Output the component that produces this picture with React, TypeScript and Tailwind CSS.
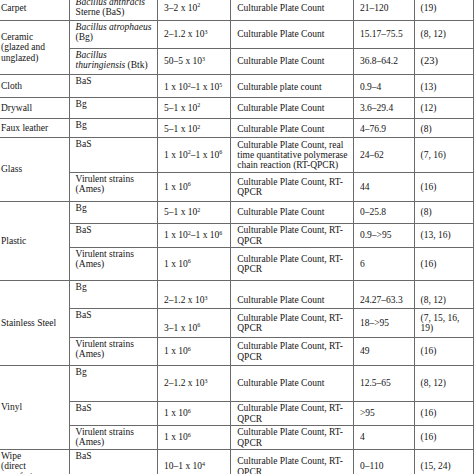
import React from "react";

const base = "border border-[#6a6a6a] py-0 pl-[6px] pr-[5px]";
const mid = base + " align-middle";
const top = base + " align-top pt-[1px]";
const c1 = "border border-[#6a6a6a] py-0 pl-[6px] pr-[10px] align-middle";

const Sup = ({ children }: { children: React.ReactNode }) => (
  <sup className="text-[6px] top-[-0.6em]">{children}</sup>
);

const CPC = "Culturable Plate Count";
const RT = "Culturable Plate Count, RT-QPCR";

export default function App() {
  return (
    <div className="w-[474px] h-[474px] overflow-hidden bg-white">
      <table className="table-fixed border-collapse -ml-[6px] -mt-[5px] font-['Liberation_Serif',serif] text-[9.5px] leading-[10.3px] text-[#141414]">
        <colgroup>
          <col className="w-[75px]" />
          <col className="w-[89px]" />
          <col className="w-[74px]" />
          <col className="w-[124px]" />
          <col className="w-[61px]" />
          <col className="w-[60px]" />
        </colgroup>
        <tbody>
          <tr className="h-[25px]">
            <td className={c1}>Carpet</td>
            <td className={top}>
              <span className="italic">Bacillus anthracis</span> Sterne (BaS)
            </td>
            <td className={mid}>3–2 x 10<Sup>2</Sup></td>
            <td className={mid}>{CPC}</td>
            <td className={mid}>21–120</td>
            <td className={mid}>(19)</td>
          </tr>
          <tr className="h-[28px]">
            <td className={c1} rowSpan={2}>Ceramic (glazed and unglazed)</td>
            <td className={top}>
              <span className="italic">Bacillus atrophaeus</span> (Bg)
            </td>
            <td className={mid}>2–1.2 x 10<Sup>3</Sup></td>
            <td className={mid}>{CPC}</td>
            <td className={mid}>15.17–75.5</td>
            <td className={mid}>(8, 12)</td>
          </tr>
          <tr className="h-[26px]">
            <td className={top}>
              <span className="italic">Bacillus thuringiensis</span> (Btk)
            </td>
            <td className={mid}>50–5 x 10<Sup>3</Sup></td>
            <td className={mid}>{CPC}</td>
            <td className={mid}>36.8–64.2</td>
            <td className={mid + " text-[10.5px]"}>(23)</td>
          </tr>
          <tr className="h-[23px]">
            <td className={c1}>Cloth</td>
            <td className={top}>BaS</td>
            <td className={mid + " pt-[3px]"}>1 x 10<Sup>2</Sup>–1 x 10<Sup>5</Sup></td>
            <td className={mid + " pt-[3px]"}>Culturable plate count</td>
            <td className={mid + " pt-[3px]"}>0.9–4</td>
            <td className={mid + " pt-[3px]"}>(13)</td>
          </tr>
          <tr className="h-[21px]">
            <td className={c1}>Drywall</td>
            <td className={top}>Bg</td>
            <td className={mid}>5–1 x 10<Sup>2</Sup></td>
            <td className={mid}>{CPC}</td>
            <td className={mid}>3.6–29.4</td>
            <td className={mid}>(12)</td>
          </tr>
          <tr className="h-[19px]">
            <td className={c1}>Faux leather</td>
            <td className={top}>Bg</td>
            <td className={mid + " pt-[3px]"}>5–1 x 10<Sup>2</Sup></td>
            <td className={mid + " pt-[3px]"}>{CPC}</td>
            <td className={mid + " pt-[3px]"}>4–76.9</td>
            <td className={mid + " pt-[3px]"}>(8)</td>
          </tr>
          <tr className="h-[35px]">
            <td className={c1} rowSpan={2}>Glass</td>
            <td className={top}>BaS</td>
            <td className={mid}>1 x 10<Sup>2</Sup>–1 x 10<Sup>6</Sup></td>
            <td className={mid}>
              Culturable Plate Count, real time quantitative polymerase chain reaction (RT-QPCR)
            </td>
            <td className={mid}>24–62</td>
            <td className={mid}>(7, 16)</td>
          </tr>
          <tr className="h-[29px]">
            <td className={top}>Virulent strains (Ames)</td>
            <td className={mid}>1 x 10<Sup>6</Sup></td>
            <td className={mid}>{RT}</td>
            <td className={mid}>44</td>
            <td className={mid}>(16)</td>
          </tr>
          <tr className="h-[22px]">
            <td className={c1} rowSpan={3}>Plastic</td>
            <td className={top}>Bg</td>
            <td className={mid}>5–1 x 10<Sup>2</Sup></td>
            <td className={mid}>{CPC}</td>
            <td className={mid}>0–25.8</td>
            <td className={mid}>(8)</td>
          </tr>
          <tr className="h-[24px]">
            <td className={top}>BaS</td>
            <td className={mid}>1 x 10<Sup>2</Sup>–1 x 10<Sup>6</Sup></td>
            <td className={mid}>{RT}</td>
            <td className={mid}>0.9–&gt;95</td>
            <td className={mid}>(13, 16)</td>
          </tr>
          <tr className="h-[33px]">
            <td className={top}>Virulent strains (Ames)</td>
            <td className={mid}>1 x 10<Sup>6</Sup></td>
            <td className={mid}>{RT}</td>
            <td className={mid}>6</td>
            <td className={mid}>(16)</td>
          </tr>
          <tr className="h-[28px]">
            <td className={c1} rowSpan={3}>Stainless Steel</td>
            <td className={top}>Bg</td>
            <td className={mid + " pt-[12px]"}>2–1.2 x 10<Sup>3</Sup></td>
            <td className={mid + " pt-[12px]"}>{CPC}</td>
            <td className={mid + " pt-[12px]"}>24.27–63.3</td>
            <td className={mid + " pt-[12px]"}>(8, 12)</td>
          </tr>
          <tr className="h-[29px]">
            <td className={top}>BaS</td>
            <td className={mid + " pt-[10px]"}>3–1 x 10<Sup>6</Sup></td>
            <td className={mid}>{RT}</td>
            <td className={mid}>18–&gt;95</td>
            <td className={mid}>(7, 15, 16, 19)</td>
          </tr>
          <tr className="h-[28px]">
            <td className={top}>Virulent strains (Ames)</td>
            <td className={mid}>1 x 10<Sup>6</Sup></td>
            <td className={mid}>{RT}</td>
            <td className={mid}>49</td>
            <td className={mid}>(16)</td>
          </tr>
          <tr className="h-[36px]">
            <td className={c1} rowSpan={3}>Vinyl</td>
            <td className={top}>Bg</td>
            <td className={mid}>2–1.2 x 10<Sup>3</Sup></td>
            <td className={mid}>{CPC}</td>
            <td className={mid}>12.5–65</td>
            <td className={mid}>(8, 12)</td>
          </tr>
          <tr className="h-[24px]">
            <td className={top}>BaS</td>
            <td className={mid}>1 x 10<Sup>6</Sup></td>
            <td className={mid}>{RT}</td>
            <td className={mid}>&gt;95</td>
            <td className={mid}>(16)</td>
          </tr>
          <tr className="h-[24px]">
            <td className={top}>Virulent strains (Ames)</td>
            <td className={mid}>1 x 10<Sup>6</Sup></td>
            <td className={mid}>{RT}</td>
            <td className={mid}>4</td>
            <td className={mid}>(16)</td>
          </tr>
          <tr className="h-[34px]">
            <td className={c1}>
              Wipe
              <br />
              (direct
              <br />
              transfer)
            </td>
            <td className={top}>BaS</td>
            <td className={mid}>10–1 x 10<Sup>4</Sup></td>
            <td className={mid}>{RT}</td>
            <td className={mid}>0–110</td>
            <td className={mid}>(15, 24)</td>
          </tr>
        </tbody>
      </table>
    </div>
  );
}
